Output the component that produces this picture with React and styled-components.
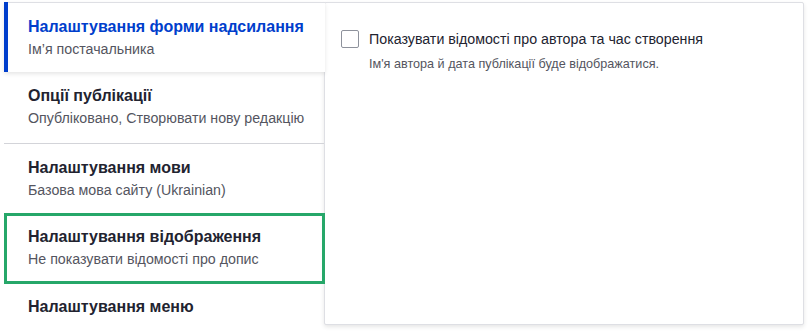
import React from "react";
import styled, { createGlobalStyle, css } from "styled-components";

const Global = createGlobalStyle`
  html, body { margin: 0; padding: 0; background: #fff; }
  body { font-family: "Liberation Sans", Arial, sans-serif; color: #222330; }
`;

const Page = styled.div`
  padding: 2px 4px 0 4px;
`;

const VerticalTabs = styled.div`
  display: grid;
  grid-template-columns: 320px 1fr;
  align-items: start;
`;

const Menu = styled.ul`
  list-style: none;
  margin: 0;
  padding: 0;
  position: relative;
  z-index: 1;
`;

const MenuItem = styled.li`
  position: relative;
  box-sizing: border-box;
  width: 320px;
  padding: 13px 16px 11px 24px;
  height: ${(p) => p.$h || 70}px;
  ${(p) => p.$sep && css`border-top: 1px solid #d3d4d9;`}
  ${(p) =>
    p.$selected &&
    css`
      width: 321px;
      background: #fff;
      border-top: 1px solid #dedfe4;
      box-shadow: 0 2px 4px rgba(0, 0, 0, 0.1);
      &::before {
        content: "";
        position: absolute;
        left: 0;
        top: -1px;
        bottom: 0;
        width: 4px;
        background: #003ecc;
      }
    `}
  ${(p) =>
    p.$focus &&
    css`
      &::after {
        content: "";
        position: absolute;
        inset: 0 -1px -1px 0;
        border: 3px solid #26a769;
      }
    `}
`;

const Title = styled.div`
  font-size: 16px;
  font-weight: 700;
  line-height: 22px;
  color: ${(p) => (p.$selected ? "#003ecc" : "#222330")};
`;

const Summary = styled.div`
  font-size: 14.22px;
  line-height: 22px;
  color: #545560;
  white-space: nowrap;
`;

const Pane = styled.div`
  box-sizing: border-box;
  height: 323px;
  background: #fff;
  border: 1px solid #dedfe4;
  border-radius: 2px;
  box-shadow: 0 2px 4px rgba(0, 0, 0, 0.1);
  padding: 26px 16px 16px 16px;
`;

const CheckRow = styled.label`
  display: flex;
  align-items: center;
  gap: 10px;
`;

const Box = styled.span`
  box-sizing: border-box;
  width: 18px;
  height: 18px;
  border: 1px solid #8e929c;
  border-radius: 2px;
  background: #fff;
  flex: none;
`;

const CheckLabel = styled.span`
  font-size: 14.22px;
  line-height: 20px;
  color: #222330;
`;

const Description = styled.div`
  margin: 7px 0 0 28px;
  font-size: 12.64px;
  line-height: 16px;
  color: #545560;
`;

const tabs = [
  { title: "Налаштування форми надсилання", summary: "Ім’я постачальника", selected: true, h: 70 },
  { title: "Опції публікації", summary: "Опубліковано, Створювати нову редакцію", h: 71 },
  { title: "Налаштування мови", summary: "Базова мова сайту (Ukrainian)", sep: true, h: 70 },
  { title: "Налаштування відображення", summary: "Не показувати відомості про допис", focus: true, h: 70 },
  { title: "Налаштування меню", summary: "", h: 70 },
];

export default function App() {
  return (
    <>
      <Global />
      <Page>
        <VerticalTabs>
          <Menu>
            {tabs.map((t) => (
              <MenuItem key={t.title} $selected={t.selected} $focus={t.focus} $sep={t.sep} $h={t.h}>
                <Title $selected={t.selected}>{t.title}</Title>
                {t.summary && <Summary>{t.summary}</Summary>}
              </MenuItem>
            ))}
          </Menu>
          <Pane>
            <CheckRow>
              <Box />
              <CheckLabel>Показувати відомості про автора та час створення</CheckLabel>
            </CheckRow>
            <Description>Ім'я автора й дата публікації буде відображатися.</Description>
          </Pane>
        </VerticalTabs>
      </Page>
    </>
  );
}
